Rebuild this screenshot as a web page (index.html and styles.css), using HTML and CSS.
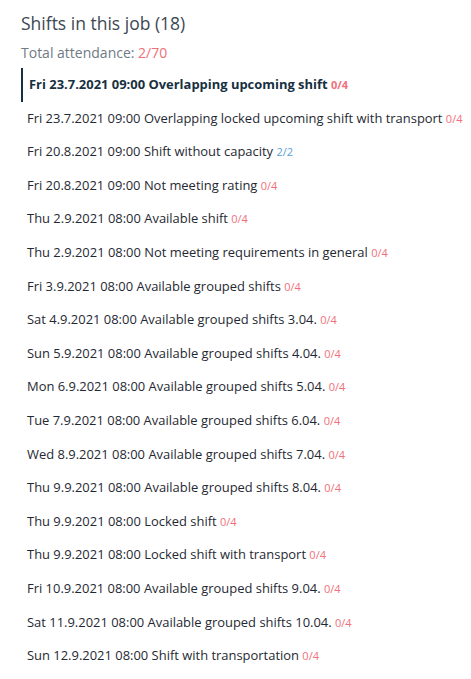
FILE: index.html
```html
<!DOCTYPE html>
<html lang="en">
<head>
    <meta charset="UTF-8">
    <meta name="viewport" content="width=device-width, initial-scale=1.0">
    <title>Shifts in this job</title>
    <link rel="stylesheet" href="styles.css">
</head>
<body>
    <div class="shifts">
        <h2 class="shifts-title">Shifts in this job (18)</h2>
        <div class="attendance">Total attendance: <span class="count">2/70</span></div>
        <ul class="shift-list">
            <li class="shift active">Fri 23.7.2021 09:00 Overlapping upcoming shift <span class="count">0/4</span></li>
            <li class="shift">Fri 23.7.2021 09:00 Overlapping locked upcoming shift with transport <span class="count">0/4</span></li>
            <li class="shift">Fri 20.8.2021 09:00 Shift without capacity <span class="count full">2/2</span></li>
            <li class="shift">Fri 20.8.2021 09:00 Not meeting rating <span class="count">0/4</span></li>
            <li class="shift">Thu 2.9.2021 08:00 Available shift <span class="count">0/4</span></li>
            <li class="shift">Thu 2.9.2021 08:00 Not meeting requirements in general <span class="count">0/4</span></li>
            <li class="shift">Fri 3.9.2021 08:00 Available grouped shifts <span class="count">0/4</span></li>
            <li class="shift">Sat 4.9.2021 08:00 Available grouped shifts 3.04. <span class="count">0/4</span></li>
            <li class="shift">Sun 5.9.2021 08:00 Available grouped shifts 4.04. <span class="count">0/4</span></li>
            <li class="shift">Mon 6.9.2021 08:00 Available grouped shifts 5.04. <span class="count">0/4</span></li>
            <li class="shift">Tue 7.9.2021 08:00 Available grouped shifts 6.04. <span class="count">0/4</span></li>
            <li class="shift">Wed 8.9.2021 08:00 Available grouped shifts 7.04. <span class="count">0/4</span></li>
            <li class="shift">Thu 9.9.2021 08:00 Available grouped shifts 8.04. <span class="count">0/4</span></li>
            <li class="shift">Thu 9.9.2021 08:00 Locked shift <span class="count">0/4</span></li>
            <li class="shift">Thu 9.9.2021 08:00 Locked shift with transport <span class="count">0/4</span></li>
            <li class="shift">Fri 10.9.2021 08:00 Available grouped shifts 9.04. <span class="count">0/4</span></li>
            <li class="shift">Sat 11.9.2021 08:00 Available grouped shifts 10.04. <span class="count">0/4</span></li>
            <li class="shift">Sun 12.9.2021 08:00 Shift with transportation <span class="count">0/4</span></li>
        </ul>
    </div>
</body>
</html>
```

FILE: styles.css
```css
* {
    margin: 0;
    padding: 0;
    box-sizing: border-box;
}

body {
    background: #fff;
    font-family: 'Open Sans', sans-serif;
    color: #1f2933;
}

.shifts {
    padding: 11px 4px 0 21px;
}

.shifts-title {
    font-size: 17.5px;
    font-weight: 400;
    line-height: 24px;
    color: #3c4852;
}

.attendance {
    margin-top: 8px;
    font-size: 14px;
    line-height: 19px;
    color: #707a84;
}

.count {
    color: #f0707a;
    font-size: 11px;
}

.attendance .count {
    font-size: 14px;
}

.count.full {
    color: #5a9fdc;
}

.shift-list {
    list-style: none;
    margin-top: 6px;
}

.shift {
    font-size: 12.95px;
    line-height: 17.6px;
    padding: 8px 0 8px 6px;
    white-space: nowrap;
}

.shift.active {
    font-weight: 700;
    color: #17303f;
    border-left: 2px solid #17303f;
    padding-left: 6px;
}
```
